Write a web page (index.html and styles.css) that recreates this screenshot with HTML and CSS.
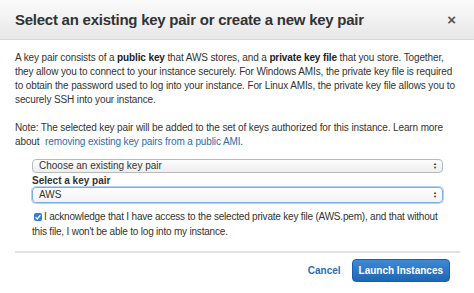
FILE: index.html
```html
<!DOCTYPE html>
<html>
<head>
<meta charset="utf-8">
<link rel="stylesheet" href="styles.css">
</head>
<body>
<div class="dialog">
  <div class="header">
    <h1 class="title">Select an existing key pair or create a new key pair</h1>
    <span class="close">×</span>
  </div>
  <div class="content">
    <p class="para">A key pair consists of a <b>public key</b> that AWS stores, and a <b>private key file</b> that you store. Together, they allow you to connect to your instance securely. For Windows AMIs, the private key file is required to obtain the password used to log into your instance. For Linux AMIs, the private key file allows you to securely SSH into your instance.</p>
    <p class="para">Note: The selected key pair will be added to the set of keys authorized for this instance. Learn more about <a class="link" href="#">removing existing key pairs from a public AMI</a>.</p>
    <div class="form">
      <div class="select">
        <span>Choose an existing key pair</span>
        <span class="arrows"><span>▲</span><span>▼</span></span>
      </div>
      <div class="label">Select a key pair</div>
      <div class="select focused">
        <span>AWS</span>
        <span class="arrows"><span>▲</span><span>▼</span></span>
      </div>
      <p class="ack"><span class="check"><svg viewBox="0 0 8 8" width="8" height="8"><path d="M1.6 4.2 L3.3 5.9 L6.4 2.1" fill="none" stroke="#fff" stroke-width="1.4"/></svg></span>I acknowledge that I have access to the selected private key file (AWS.pem), and that without this file, I won't be able to log into my instance.</p>
    </div>
  </div>
  <div class="footer">
    <a class="cancel" href="#">Cancel</a>
    <button class="launch">Launch Instances</button>
  </div>
</div>
</body>
</html>
```

FILE: styles.css
```css
html, body {
  margin: 0;
  padding: 0;
  background: #fff;
}
body {
  font-family: "Liberation Sans", Arial, sans-serif;
  color: #333;
  width: 474px;
  height: 293px;
  overflow: hidden;
}
.dialog {
  display: flex;
  flex-direction: column;
}
.header {
  height: 39px;
  border-bottom: 1px solid #d8d8d8;
  background: linear-gradient(#fbfbfb, #e7e7e7);
  display: flex;
  align-items: center;
  justify-content: space-between;
  padding: 0 18px 0 15px;
}
.title {
  margin: 0;
  font-size: 15px;
  letter-spacing: -0.25px;
  font-weight: bold;
  color: #333;
}
.close {
  font-size: 15px;
  color: #555;
  font-weight: bold;
}
.content {
  padding: 11px 15px 0 15px;
}
.para {
  margin: 0 0 14px 0;
  font-size: 10px;
  letter-spacing: -0.12px;
  line-height: 14px;
}
.para b { color: #222; }
.link {
  color: #2a6db3;
  text-decoration: none;
  margin-left: 3px;
}
.form {
  padding: 0 16px 0 17px;
  margin-top: -4px;
}
.select {
  height: 12px;
  border: 1px solid #b9b9b9;
  border-radius: 4px;
  background: linear-gradient(#fdfdfd, #eeeeee);
  font-size: 10px;
  line-height: 12px;
  padding: 0 5px 0 6px;
  display: flex;
  justify-content: space-between;
  align-items: center;
}
.select.focused {
  height: 14px;
  line-height: 14px;
  border: 1px solid #7aaee6;
  box-shadow: 0 0 0 1px #b4d3f4;
  background: linear-gradient(#fefefe, #f3f3f3);
}
.arrows {
  display: flex;
  flex-direction: column;
  font-size: 4px;
  line-height: 4px;
  color: #333;
}
.label {
  font-size: 10px;
  font-weight: bold;
  line-height: 13px;
  margin-top: 1px;
}
.ack {
  margin: 6px -4px 0 0;
  font-size: 10px;
  letter-spacing: -0.2px;
  line-height: 15px;
}
.check {
  display: inline-block;
  width: 8px;
  height: 8px;
  background: #2f7fd8;
  border-radius: 2px;
  vertical-align: -1px;
  margin: 0 2px 0 2px;
}
.check svg { display: block; }
.footer {
  margin: 12px 14px 0 15px;
  border-top: 2px solid #e2e2e2;
  padding: 6px 10px 0 0;
  display: flex;
  justify-content: flex-end;
  align-items: center;
  gap: 11px;
}
.cancel {
  color: #2a6db3;
  font-weight: bold;
  font-size: 10px;
  text-decoration: none;
}
.launch {
  height: 23px;
  padding: 0 6px;
  border: 1px solid #1c5fa8;
  border-radius: 4px;
  background: linear-gradient(#3d8ad6, #1f66b4);
  color: #fff;
  font-family: "Liberation Sans", Arial, sans-serif;
  font-weight: bold;
  font-size: 10px;
}
```
